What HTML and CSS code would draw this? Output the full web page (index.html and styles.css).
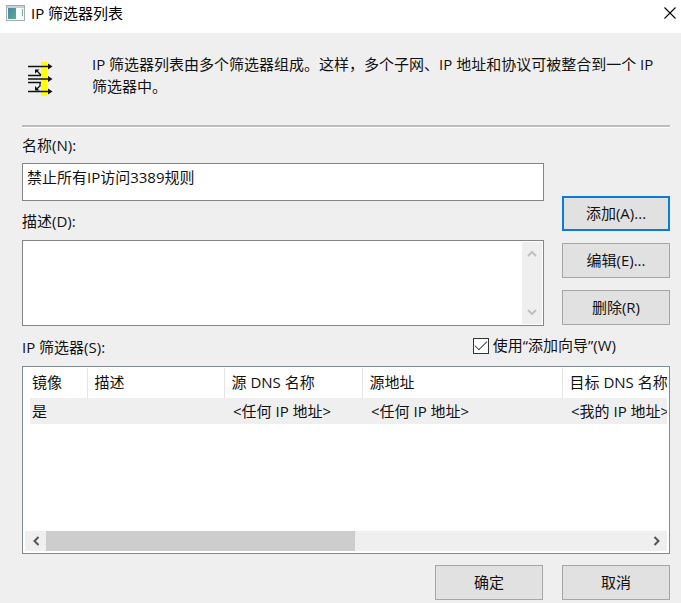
FILE: index.html
```html
<!DOCTYPE html>
<html lang="zh-CN">
<head>
<meta charset="utf-8">
<title>IP 筛选器列表</title>
<link rel="stylesheet" href="styles.css">
</head>
<body>
<form class="dialog">
  <header class="titlebar">
    <svg class="app-icon" viewBox="0 0 19 16" aria-hidden="true">
      <defs>
        <linearGradient id="pane" x1="0" y1="0" x2="1" y2="1">
          <stop offset="0" stop-color="#4b83b0"/>
          <stop offset="1" stop-color="#5bb183"/>
        </linearGradient>
      </defs>
      <rect x=".5" y=".5" width="18" height="15" fill="#f4f7f7" stroke="#a5adb2"/>
      <rect x="1" y="1" width="17" height="2" fill="#c5d0d6"/>
      <rect x="2" y="3" width="8" height="11" fill="url(#pane)"/>
      <rect x="11" y="3" width="4" height="11" fill="#fff"/>
      <rect x="16" y="4" width="1" height="7" fill="#6fb8a0"/>
    </svg>
    <h1 class="title">IP 筛选器列表</h1>
    <button class="close" type="button" aria-label="关闭">
      <svg viewBox="0 0 12 12" aria-hidden="true"><path d="M.5 .5L11.500 11.500M11.500 .5L.5 11.500" fill="none" stroke="#000" stroke-width="1.100"/></svg>
    </button>
  </header>

  <main class="content">
    <section class="intro">
      <svg class="filter-icon" viewBox="0 0 26 34" aria-hidden="true">
        <rect x="13" y="0" width="6" height="34" fill="#ff0"/>
        <path d="M0 4.500H21M0 13.500H13M0 17H21M0 20.500H13M0 29.500H21M13 13L8.500 8.500M12 21V24L8 27.500" fill="none" stroke="#111" stroke-width="1.300"/>
        <path d="M20 1.500L24.500 4.500L20 7.500ZM20 14L24.500 17L20 20ZM20 26.500L24.500 29.500L20 32.500ZM7 7.500H11.500L7 11.500ZM7 24V28.500H11.500Z" fill="#111"/>
      </svg>
      <p class="intro-text">IP 筛选器列表由多个筛选器组成。这样，多个子网、IP 地址和协议可被整合到一个 IP 筛选器中。</p>
    </section>

    <section class="editor">
      <div class="fields">
        <label class="label" for="name">名称(N):</label>
        <input class="box name" id="name" type="text" value="禁止所有IP访问3389规则">
        <label class="label" for="desc">描述(D):</label>
        <div class="box memo">
          <textarea class="memo-text" id="desc"></textarea>
          <div class="vscroll" aria-hidden="true">
            <svg class="chevron-v" viewBox="0 0 10 8"><path d="M1 6L5 2L9 6" /></svg>
            <svg class="chevron-v" viewBox="0 0 10 8"><path d="M1 2L5 6L9 2" /></svg>
          </div>
        </div>
      </div>
      <div class="actions">
        <button class="button primary" type="button">添加(A)...</button>
        <button class="button" type="button">编辑(E)...</button>
        <button class="button" type="button">删除(R)</button>
      </div>
    </section>

    <div class="list-head">
      <span class="label">IP 筛选器(S):</span>
      <label class="wizard"><input class="check" type="checkbox" checked>使用“添加向导”(W)</label>
    </div>

    <div class="list">
      <div class="list-view">
        <table class="filters">
          <colgroup><col class="c-mirror"><col class="c-desc"><col class="c-dns"><col class="c-addr"><col class="c-dest"></colgroup>
          <thead>
            <tr><th>镜像</th><th>描述</th><th>源 DNS 名称</th><th>源地址</th><th>目标 DNS 名称</th></tr>
          </thead>
          <tbody>
            <tr><td>是</td><td></td><td>&lt;任何 IP 地址&gt;</td><td>&lt;任何 IP 地址&gt;</td><td>&lt;我的 IP 地址&gt;</td></tr>
          </tbody>
        </table>
      </div>
      <div class="hscroll">
        <button class="arrow" type="button" aria-label="向左滚动"><svg viewBox="0 0 8 10" aria-hidden="true"><path d="M6.500 1L2.500 5L6.500 9"/></svg></button>
        <div class="thumb"></div>
        <div class="track"></div>
        <button class="arrow" type="button" aria-label="向右滚动"><svg viewBox="0 0 8 10" aria-hidden="true"><path d="M1.500 1L5.500 5L1.500 9"/></svg></button>
      </div>
    </div>

    <footer class="footer">
      <button class="button" type="button">确定</button>
      <button class="button" type="button">取消</button>
    </footer>
  </main>
</form>
</body>
</html>
```
FILE: styles.css
```css
* {
  box-sizing: border-box;
}

body {
  margin: 0;
  background: #efefef;
  color: #111;
}

body,
button,
input,
textarea {
  font-family: "Open Sans", "Noto Sans CJK SC", sans-serif;
  font-size: 15px;
  line-height: 22px;
}

.dialog {
  min-height: 100vh;
  display: flex;
  flex-direction: column;
}

.titlebar {
  display: flex;
  align-items: center;
  height: 33px;
  padding: 0 5px 7px 6px;
  background: #fff;
  color: #000;
}

.app-icon {
  width: 19px;
  height: 16px;
}

.title {
  flex: 1;
  margin: 0 0 0 6px;
  font-size: 15px;
  font-weight: 400;
}

.close {
  display: flex;
  padding: 0;
  border: 0;
  background: none;
}

.close svg {
  width: 12px;
  height: 12px;
}

.content {
  flex: 1;
  display: flex;
  flex-direction: column;
  padding: 0 11px 2px 22px;
}

.intro {
  display: flex;
  min-height: 94px;
  padding: 20px 0 0 6px;
  border-bottom: 2px solid #bdbdbd;
  box-shadow: 0 1px #fff;
}

.filter-icon {
  flex: none;
  width: 26px;
  height: 34px;
  margin-top: 9px;
}

.intro-text {
  margin: 0 0 0 38px;
}

.editor {
  display: flex;
  gap: 18px;
  margin-top: 7px;
}

.fields {
  flex: 1;
  display: flex;
  flex-direction: column;
}

.label {
  display: block;
}

.box {
  border: 1px solid #858585;
  background: #fff;
}

.name {
  height: 38px;
  margin: 7px 0 9px;
  padding: 0 4px 12px;
  color: #111;
  outline: 0;
}

.memo {
  display: flex;
  height: 86px;
  margin-top: 8px;
  padding: 1px;
}

.memo-text {
  flex: 1;
  min-width: 0;
  padding: 2px;
  border: 0;
  outline: 0;
  resize: none;
  background: none;
}

.vscroll {
  display: flex;
  flex-direction: column;
  align-items: center;
  justify-content: space-between;
  width: 20px;
  padding: 8px 0;
  background: #efefef;
}

.chevron-v {
  width: 10px;
  height: 8px;
}

.chevron-v path {
  fill: none;
  stroke: #c0c0c0;
  stroke-width: 2;
}

.actions {
  display: flex;
  flex-direction: column;
  justify-content: flex-end;
  gap: 12px;
  padding-bottom: 1px;
}

.button {
  width: 108px;
  height: 35px;
  padding: 0 0 1px;
  border: 1px solid #a6a6a6;
  background: #e1e1e1;
  color: #111;
}

.primary {
  border: 2px solid #0b7ad8;
}

.list-head {
  display: flex;
  align-items: flex-start;
  justify-content: space-between;
  margin: 10px 0 8px;
  padding-right: 54px;
}

.wizard {
  display: flex;
  align-items: center;
  gap: 4px;
  line-height: 19px;
}

.check {
  appearance: none;
  width: 16px;
  height: 16px;
  margin: 0;
  border: 1px solid #333;
  background: #fff;
  display: grid;
  place-items: center;
}

.check::before {
  content: "";
  width: 11px;
  height: 5px;
  margin-bottom: 3px;
  border: solid #333;
  border-width: 0 0 1px 1px;
  transform: rotate(-45deg);
}

.list {
  flex: 1;
  display: flex;
  flex-direction: column;
  min-height: 188px;
  padding: 1px 2px 2px;
  border: 1px solid #828b92;
  background: #fff;
}

.list-view {
  flex: 1;
  overflow: hidden;
}

.filters {
  width: 680px;
  table-layout: fixed;
  border-collapse: collapse;
}

.c-mirror {
  width: 62px;
}

.c-desc {
  width: 137px;
}

.c-dns {
  width: 138px;
}

.c-addr {
  width: 200px;
}

.filters th {
  height: 30px;
  padding: 0 0 2px 7px;
  border-right: 1px solid #e5e5e5;
  font-weight: 400;
  text-align: left;
  white-space: nowrap;
}

.filters td {
  height: 26px;
  padding: 0 0 0 9px;
  background: #efefef;
  white-space: nowrap;
}

.filters td:first-child {
  padding-left: 7px;
  background: linear-gradient(to right, #fff 5px, #efefef 5px);
}

.hscroll {
  display: flex;
  height: 20px;
  background: #efefef;
}

.arrow {
  display: flex;
  align-items: center;
  justify-content: center;
  width: 21px;
  padding: 0;
  border: 0;
  background: none;
}

.arrow svg {
  width: 8px;
  height: 10px;
}

.arrow path {
  fill: none;
  stroke: #555;
  stroke-width: 2;
}

.thumb {
  flex: 103;
  background: #cdcdcd;
}

.track {
  flex: 97;
}

.footer {
  display: flex;
  justify-content: flex-end;
  gap: 19px;
  margin: 11px 0 1px;
}
```
